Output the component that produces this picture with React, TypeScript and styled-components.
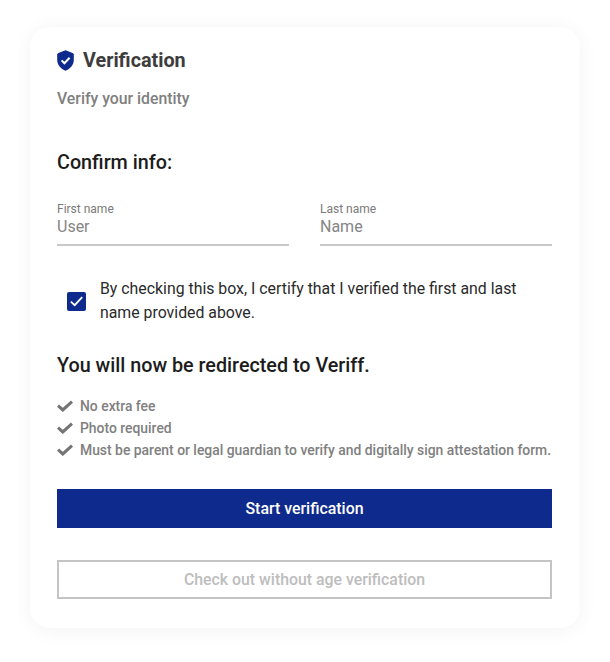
import React from "react";
import styled, { createGlobalStyle } from "styled-components";

const GlobalStyle = createGlobalStyle`
    html, body {
        margin: 0;
        padding: 0;
        background: #fff;
        font-family: Roboto, "Liberation Sans", sans-serif;
    }
`;

const Page = styled.div`
    width: 610px;
    height: 662px;
    box-sizing: border-box;
    padding: 27px 30px 0;
`;

const Card = styled.section`
    height: 601px;
    box-sizing: border-box;
    padding: 21px 28px 0 27px;
    background: #fff;
    border-radius: 20px;
    box-shadow: 0 2px 20px rgba(0, 0, 0, 0.05);
`;

const TitleRow = styled.div`
    display: flex;
    align-items: center;
    gap: 9px;
    height: 24px;
`;

const Title = styled.h1`
    margin: 0;
    padding-top: 2px;
    font-size: 19.75px;
    line-height: 24px;
    font-weight: 700;
    color: #3d3d3d;
`;

const Subtitle = styled.p`
    margin: 17px 0 0;
    font-size: 15.8px;
    line-height: 20px;
    font-weight: 500;
    color: #808080;
`;

const Heading = styled.h2<{ $top: number }>`
    margin: ${(p) => p.$top}px 0 0;
    font-size: 19.75px;
    line-height: 24px;
    font-weight: 500;
    color: #1c1c1c;
`;

const Fields = styled.div`
    display: grid;
    grid-template-columns: 232px 232px;
    column-gap: 31px;
    margin-top: 27px;
`;

const Field = styled.div`
    height: 42px;
    border-bottom: 2px solid #c8c8c8;
`;

const FieldLabel = styled.div`
    font-size: 12px;
    line-height: 14px;
    color: #7a7a7a;
`;

const FieldValue = styled.div`
    font-size: 16px;
    line-height: 22px;
    color: #858585;
`;

const Consent = styled.label`
    display: flex;
    align-items: center;
    gap: 14px;
    margin-top: 31px;
    padding: 0 30px 0 10px;
`;

const Box = styled.span`
    flex: none;
    display: flex;
    align-items: center;
    justify-content: center;
    width: 19px;
    height: 19px;
    border-radius: 2px;
    background: #0e2a8c;
`;

const ConsentText = styled.span`
    font-size: 15.85px;
    line-height: 24px;
    color: #2a2a2a;
`;

const Checks = styled.ul`
    list-style: none;
    margin: 17px 0 0;
    padding: 0;
`;

const CheckItem = styled.li`
    display: flex;
    align-items: center;
    gap: 7px;
    height: 22px;
    font-size: 13.9px;
    font-weight: 500;
    color: #808080;
    white-space: nowrap;
`;

const Primary = styled.button`
    display: block;
    width: 495px;
    height: 39px;
    margin-top: 28px;
    border: 0;
    background: #0e2a8c;
    color: #fff;
    font-family: inherit;
    font-size: 15.9px;
    font-weight: 500;
`;

const Secondary = styled.button`
    display: block;
    width: 495px;
    height: 39px;
    margin-top: 32px;
    border: 2px solid #c4c4c4;
    background: #fff;
    color: #bdbdbd;
    font-family: inherit;
    font-size: 15.85px;
    font-weight: 500;
`;

const ShieldIcon = () => (
    <svg width="17" height="21" viewBox="0 0 17 21" aria-hidden="true">
        <path
            d="M8.5 0.3 L15.6 2.9 Q16.8 3.4 16.8 4.6 V10 C16.8 15 13.2 18.9 8.5 20.7 C3.8 18.9 0.2 15 0.2 10 V4.6 Q0.2 3.4 1.4 2.9 Z"
            fill="#0e2a8c"
        />
        <path d="M4.6 10.4 L7.4 13.2 L12.6 7.8" fill="none" stroke="#fff" strokeWidth="2" />
    </svg>
);

const TickIcon = () => (
    <svg width="16" height="12" viewBox="0 0 16 12" aria-hidden="true">
        <path d="M1 5.6 L5.8 10 L15 1.6" fill="none" stroke="#757575" strokeWidth="3.1" />
    </svg>
);

const BoxTick = () => (
    <svg width="13" height="11" viewBox="0 0 13 11" aria-hidden="true">
        <path d="M0.8 5.6 L4.7 9.2 L12.2 1.2" fill="none" stroke="#fff" strokeWidth="1.8" />
    </svg>
);

const items = [
    "No extra fee",
    "Photo required",
    "Must be parent or legal guardian to verify and digitally sign attestation form.",
];

export default function App() {
    return (
        <Page>
            <GlobalStyle />
            <Card>
                <TitleRow>
                    <ShieldIcon />
                    <Title>Verification</Title>
                </TitleRow>
                <Subtitle>Verify your identity</Subtitle>
                <Heading $top={42}>Confirm info:</Heading>
                <Fields>
                    <Field>
                        <FieldLabel>First name</FieldLabel>
                        <FieldValue>User</FieldValue>
                    </Field>
                    <Field>
                        <FieldLabel>Last name</FieldLabel>
                        <FieldValue>Name</FieldValue>
                    </Field>
                </Fields>
                <Consent>
                    <Box>
                        <BoxTick />
                    </Box>
                    <ConsentText>
                        By checking this box, I certify that I verified the first and last name provided above.
                    </ConsentText>
                </Consent>
                <Heading $top={29}>You will now be redirected to Veriff.</Heading>
                <Checks>
                    {items.map((item) => (
                        <CheckItem key={item}>
                            <TickIcon />
                            {item}
                        </CheckItem>
                    ))}
                </Checks>
                <Primary>Start verification</Primary>
                <Secondary>Check out without age verification</Secondary>
            </Card>
        </Page>
    );
}
